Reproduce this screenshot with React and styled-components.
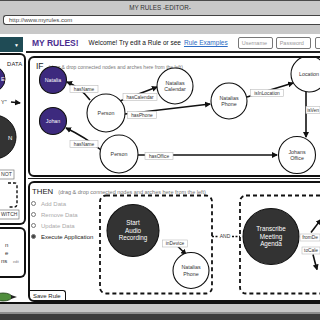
import styled, { createGlobalStyle } from "styled-components";

const GlobalStyle = createGlobalStyle`
  html, body { margin: 0; padding: 0; background: #c8c8c8; }
  body { font-family: "Liberation Sans", Arial, sans-serif; }
  * { box-sizing: border-box; }
`;

const Window = styled.div`
  width: 320px;
  height: 320px;
  overflow: hidden;
  display: flex;
  flex-direction: column;
  background: #c8c8c8;
  border-top: 1px solid #4a4a4a;
`;

const TitleBar = styled.div`
  height: 12px;
  display: flex;
  align-items: center;
  justify-content: center;
  font-size: 6.3px;
  color: #333;
`;

const UrlBar = styled.div`
  margin: 2px 0 0 3px;
  height: 10px;
  display: flex;
  align-items: center;
  padding-left: 5px;
  background: #fff;
  border: 1px solid #444;
  border-right: none;
  border-radius: 3px 0 0 3px;
  font-size: 6px;
  color: #444;
`;

const AppArea = styled.div`
  margin-top: 9px;
  height: 270px;
  display: flex;
  background: #fff;
  border-bottom: 2px solid #111;
`;

const Footer = styled.div`
  flex: 1;
  background: linear-gradient(#c6c6c6 0 8px, #8d8d8d 8px 10px, #3b3b3b 10px);
`;

const Sidebar = styled.div`
  width: 26px;
  flex-shrink: 0;
  display: flex;
  flex-direction: column;
`;

const TealHeader = styled.div`
  margin-top: 3px;
  width: 23px;
  height: 15px;
  display: flex;
  align-items: center;
  justify-content: flex-end;
  padding-right: 4px;
  background: #1f4b55;
  color: #fff;
  font-size: 5px;
`;

const SidePanel = styled.div`
  position: relative;
  margin-top: ${(p) => p.$top}px;
  height: ${(p) => p.$height}px;
  border: 2px solid #111;
  border-left: none;
  border-radius: 0 6px 6px 0;
  overflow: hidden;
`;

const SideTitle = styled.div`
  padding: 6px 0 0 7px;
  font-size: 5.8px;
  color: #222;
  letter-spacing: 0.2px;
`;

const Leaf = styled.svg`
  margin-top: 14px;
  display: block;
`;

const Main = styled.div`
  width: 300px;
  flex-shrink: 0;
  display: flex;
  flex-direction: column;
`;

const Header = styled.div`
  height: 19px;
  display: flex;
  align-items: center;
  padding-left: 6px;
  border-bottom: 2px solid #222;
  white-space: nowrap;
`;

const Brand = styled.div`
  flex-shrink: 0;
  font-size: 8.5px;
  font-weight: 700;
  color: #4b2d8f;
`;

const Welcome = styled.div`
  flex-shrink: 0;
  margin-left: 10px;
  font-size: 6.5px;
  color: #111;
`;

const Link = styled.span`
  margin-left: 3px;
  color: #2b6cc4;
  text-decoration: underline;
`;

const Field = styled.div`
  margin-left: ${(p) => p.$gap}px;
  width: ${(p) => p.$width || 35}px;
  height: 12px;
  flex-shrink: 0;
  display: flex;
  align-items: center;
  padding-left: 3px;
  border: 1px solid #777;
  border-radius: 2px;
  font-size: 5.5px;
  color: #999;
`;

const Panel = styled.div`
  position: relative;
  margin: ${(p) => p.$top}px 0 0 2px;
  height: ${(p) => (p.$height ? `${p.$height}px` : "auto")};
  flex: ${(p) => (p.$height ? "none" : "1")};
  display: flex;
  flex-direction: column;
  border: 2px solid #111;
  border-radius: 6px;
  overflow: hidden;
`;

const Divider = styled.div`
  margin: 1px 0 0 2px;
  height: 1px;
  background: #222;
`;

const Heading = styled.div`
  display: flex;
  align-items: baseline;
  padding: ${(p) => p.$pad};
  white-space: nowrap;
`;

const HeadWord = styled.span`
  font-size: ${(p) => p.$size}px;
  color: #222;
`;

const Hint = styled.span`
  margin-left: 5px;
  font-size: ${(p) => p.$size}px;
  color: #777;
`;

const RadioList = styled.div`
  margin: 4px 0 0 1px;
  display: flex;
  flex-direction: column;
  gap: 3.5px;
`;

const RadioRow = styled.div`
  display: flex;
  align-items: center;
  gap: 5px;
  height: 7.5px;
  font-size: 6px;
  color: ${(p) => (p.$on ? "#222" : "#aaa")};
`;

const Dot = styled.span`
  width: 5px;
  height: 5px;
  border-radius: 50%;
  border: 1px solid #777;
  background: ${(p) => (p.$on ? "#444" : "#fff")};
`;

const SaveButton = styled.div`
  margin-top: auto;
  align-self: flex-start;
  padding: 2px 4px 1px 3px;
  border: 1.5px solid #111;
  border-left: none;
  border-bottom: none;
  border-radius: 0 3px 0 0;
  font-size: 6px;
  color: #222;
`;

const Diagram = styled.svg`
  position: absolute;
  inset: 0;
  width: 100%;
  height: 100%;
  font-family: "Liberation Sans", Arial, sans-serif;
  pointer-events: none;
`;

const Arrow = ({ id }) => (
  <defs>
    <marker
      id={id}
      markerWidth="6"
      markerHeight="6"
      refX="5"
      refY="3"
      orient="auto"
      markerUnits="userSpaceOnUse"
    >
      <path d="M0,0 L6,3 L0,6 z" fill="#111" />
    </marker>
  </defs>
);

const Node = ({ x, y, r, lines, fill = "#fff", color = "#333", size = 5.3 }) => {
  const lh = size * 1.2;
  const start = y - ((lines.length - 1) * lh) / 2;
  return (
    <g>
      <circle cx={x} cy={y} r={r} fill={fill} stroke="#111" strokeWidth="1.1" />
      <text textAnchor="middle" fontSize={size} fill={color}>
        {lines.map((l, i) => (
          <tspan key={i} x={x} y={start + i * lh} dy="0.35em">
            {l}
          </tspan>
        ))}
      </text>
    </g>
  );
};

const Tag = ({ x, y, w, text, border = "#bbb" }) => (
  <g>
    <rect x={x - w / 2} y={y - 3.5} width={w} height="7" fill="#fff" stroke={border} strokeWidth="0.6" />
    <text x={x} y={y} dy="0.35em" textAnchor="middle" fontSize="4.8" fill="#333">
      {text}
    </text>
  </g>
);

const Edge = ({ d, id }) => (
  <path d={d} fill="none" stroke="#111" strokeWidth="1.6" markerEnd={id ? `url(#${id})` : undefined} />
);

const IfDiagram = () => (
  <Diagram viewBox="30 57 294 117">
    <Arrow id="a-if" />
    <Edge d="M90 99 Q80 86 67 81" id="a-if" />
    <Edge d="M120 100 L157 86" id="a-if" />
    <Edge d="M125 113 L210 103" id="a-if" />
    <Edge d="M247 96 L293 82" id="a-if" />
    <Edge d="M306 91 L306 136" id="a-if" />
    <Edge d="M138 154 L277 154" id="a-if" />
    <Edge d="M101 149 Q85 136 66 127" id="a-if" />

    <Node x={53} y={79} r={13.5} lines={["Natalia"]} fill="#3d2a7e" color="#fff" />
    <Node x={53} y={120} r={13.5} lines={["Johan"]} fill="#3d2a7e" color="#fff" />
    <Node x={106} y={112} r={19} lines={["Person"]} />
    <Node x={119} y={153} r={19} lines={["Person"]} />
    <Node x={175} y={85} r={18} lines={["Natalias", "Calendar"]} />
    <Node x={229} y={100} r={18} lines={["Natalias", "Phone"]} />
    <Node x={309} y={73} r={18} lines={["Location"]} />
    <Node x={297} y={154} r={18.5} lines={["Johans", "Office"]} />

    <Tag x={84} y={88} w={28} text="hasName" />
    <Tag x={140} y={96} w={34} text="hasCalendar" />
    <Tag x={142} y={114} w={29} text="hasPhone" />
    <Tag x={267} y={92} w={33} text="isInLocation" />
    <Tag x={313} y={109} w={14} text="isVen" />
    <Tag x={159} y={155} w={28} text="hasOffice" />
    <Tag x={84} y={143} w={28} text="hasName" />
  </Diagram>
);

const ThenDiagram = () => (
  <Diagram viewBox="30 183 294 116">
    <Arrow id="a-then" />
    <rect x="100" y="195" width="112" height="98" rx="6" fill="none" stroke="#111" strokeWidth="1.8" strokeDasharray="4 3" />
    <rect x="240" y="195" width="100" height="98" rx="6" fill="none" stroke="#111" strokeWidth="1.8" strokeDasharray="4 3" />
    <path d="M212 236 H218 M232 236 H240" stroke="#111" strokeWidth="1.6" strokeDasharray="2 1.5" />
    <text x="225" y="236" dy="0.35em" textAnchor="middle" fontSize="5" fill="#333">AND</text>

    <Edge d="M178 246 L186 254" id="a-then" />
    <Edge d="M311 232 L321 219" id="a-then" />
    <Edge d="M313 254 Q315 262 317 269" id="a-then" />

    <Node x={133} y={230} r={26} lines={["Start", "Audio", "Recording"]} fill="#333" color="#fff" size={6.3} />
    <Node x={191} y={270} r={18} lines={["Natalias", "Phone"]} />
    <Node x={271} y={236} r={28} lines={["Transcribe", "Meeting", "Agenda"]} fill="#333" color="#fff" size={6.3} />

    <Tag x={175} y={243} w={25} text="inDevice" />
    <Tag x={310} y={237} w={20} text="fromDe" />
    <Tag x={311} y={250} w={18} text="toCale" />
  </Diagram>
);

const PaletteTop = () => (
  <Diagram viewBox="0 54 24 168">
    <Arrow id="a-side" />
    <circle cx="-8" cy="78" r="13" fill="#3d2a7e" stroke="#111" strokeWidth="1" />
    <text x="1" y="78" dy="0.35em" fontSize="5.5" fill="#fff">E</text>
    <text x="1" y="101" dy="0.35em" fontSize="5.5" fill="#333">Y"</text>
    <path d="M11 101 L20 102" stroke="#111" strokeWidth="1.6" markerEnd="url(#a-side)" />
    <circle cx="-6" cy="136" r="22" fill="#333" stroke="#111" strokeWidth="1" />
    <text x="8" y="137" dy="0.35em" fontSize="6" fill="#fff">N</text>
    <rect x="-3" y="169" width="17" height="9" fill="#fff" stroke="#777" strokeWidth="0.7" />
    <text x="1" y="173.5" dy="0.35em" fontSize="5.2" fill="#333">NOT</text>
    <path d="M8 182 H15 Q17 182 17 184 V203 Q17 206 14 206 H8" fill="none" stroke="#111" strokeWidth="1.4" strokeDasharray="3 2" />
    <rect x="-3" y="209" width="22" height="9" fill="#fff" stroke="#777" strokeWidth="0.7" />
    <text x="1" y="213.5" dy="0.35em" fontSize="5" fill="#333">WITCH</text>
  </Diagram>
);

const PaletteBottom = () => (
  <Diagram viewBox="0 228 24 47">
    <text x="5" y="244" dy="0.35em" fontSize="6" fill="#333">n</text>
    <text x="5" y="252" dy="0.35em" fontSize="6" fill="#333">e</text>
    <text x="1" y="260" dy="0.35em" fontSize="6" fill="#333">ns</text>
    <text x="13" y="260.5" dy="0.35em" fontSize="3.5" fill="#777">edit</text>
  </Diagram>
);

const options = ["Add Data", "Remove Data", "Update Data", "Execute Application"];

export default function App() {
  return (
    <>
      <GlobalStyle />
      <Window>
        <TitleBar>MY RULES -EDITOR-</TitleBar>
        <UrlBar>http://www.myrules.com</UrlBar>
        <AppArea>
          <Sidebar>
            <TealHeader>▼</TealHeader>
            <SidePanel $top={1} $height={172}>
              <SideTitle>DATA</SideTitle>
              <PaletteTop />
            </SidePanel>
            <SidePanel $top={2} $height={51}>
              <PaletteBottom />
            </SidePanel>
            <Leaf width="24" height="10" viewBox="0 0 24 10">
              <ellipse cx="3" cy="5" rx="9" ry="4" fill="#4f8d3c" stroke="#1e3b16" strokeWidth="0.8" />
              <path d="M11 3 L17 5 L11 7 z" fill="#222" />
            </Leaf>
          </Sidebar>
          <Main>
            <Header>
              <Brand>MY RULES!</Brand>
              <Welcome>
                Welcome! Try edit a Rule or see
                <Link>Rule Examples</Link>
              </Welcome>
              <Field $gap={10}>Username</Field>
              <Field $gap={3}>Password</Field>
              <Field $gap={4} $width={20} />
            </Header>
            <Panel $top={3} $height={121}>
              <Heading $pad="3px 0 0 6px">
                <HeadWord $size={8.5}>IF</HeadWord>
                <Hint $size={5}>(drag &amp; drop connected nodes and arches here from the left)</Hint>
              </Heading>
              <IfDiagram />
            </Panel>
            <Divider />
            <Panel $top={2}>
              <Heading $pad="4px 0 0 2px">
                <HeadWord $size={7.8}>THEN</HeadWord>
                <Hint $size={5.5}>(drag &amp; drop connected nodes and arches here from the left)</Hint>
              </Heading>
              <RadioList>
                {options.map((o, i) => (
                  <RadioRow key={o} $on={i === 3}>
                    <Dot $on={i === 3} />
                    {o}
                  </RadioRow>
                ))}
              </RadioList>
              <SaveButton>Save Rule</SaveButton>
              <ThenDiagram />
            </Panel>
          </Main>
        </AppArea>
        <Footer />
      </Window>
    </>
  );
}
